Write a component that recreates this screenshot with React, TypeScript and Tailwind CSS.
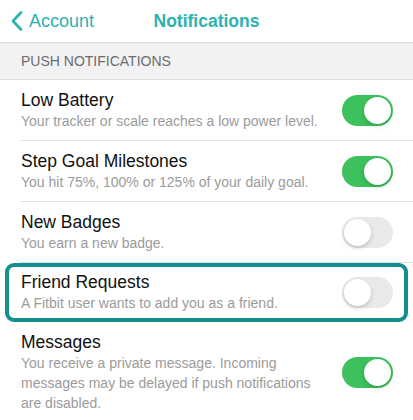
type Setting = {
  id: string;
  title: string;
  detail: string;
  enabled: boolean;
  highlighted?: boolean;
};

const settings: Setting[] = [
  { id: "battery", title: "Low Battery", detail: "Your tracker or scale reaches a low power level.", enabled: true },
  { id: "steps", title: "Step Goal Milestones", detail: "You hit 75%, 100% or 125% of your daily goal.", enabled: true },
  { id: "badges", title: "New Badges", detail: "You earn a new badge.", enabled: false },
  { id: "friends", title: "Friend Requests", detail: "A Fitbit user wants to add you as a friend.", enabled: false, highlighted: true },
  {
    id: "messages",
    title: "Messages",
    detail: "You receive a private message. Incoming messages may be delayed if push notifications are disabled.",
    enabled: true,
  },
];

const BackChevron = () => (
  <svg width="12" height="20" viewBox="0 0 12 20" fill="none" className="mr-[6px]">
    <path d="M10 1.5 L2 10 L10 18.5" stroke="currentColor" strokeWidth="2.6" strokeLinecap="round" strokeLinejoin="round" />
  </svg>
);

const Toggle = ({ on }: { on: boolean }) => (
  <div
    className={`relative h-[31px] w-[51px] shrink-0 rounded-full ${
      on ? "bg-[#3cc15c]" : "bg-[#e9e9eb]"
    }`}
  >
    <div
      className={`absolute top-[2px] h-[27px] w-[27px] rounded-full bg-white shadow-[0_2px_4px_rgba(0,0,0,0.18)] ${
        on ? "left-[22px]" : "left-[2px]"
      }`}
    />
  </div>
);

const RowBody = ({ item, className }: { item: Setting; className: string }) => (
  <div className={`flex items-center gap-3 ${className}`}>
    <div className="min-w-0 flex-1">
      <div className="text-[17.5px] leading-[22px] text-[#111]">{item.title}</div>
      <div className="max-w-[310px] text-[14px] leading-[20px] text-[#9b9b9b]">{item.detail}</div>
    </div>
    <Toggle on={item.enabled} />
  </div>
);

const SettingRow = ({ item, divider }: { item: Setting; divider: boolean }) => {
  // the highlighted row keeps its text in line with the others inside a 5px inset + 4px border
  if (item.highlighted) {
    return (
      <div className="mx-[5px] rounded-[9px] border-4 border-[#168e8d]">
        <RowBody item={item} className="pb-[5px] pl-[12px] pr-[11px] pt-[4px]" />
      </div>
    );
  }

  return (
    <div>
      <RowBody item={item} className="py-[9px] pl-[21px] pr-[20px]" />
      {divider && <div className="ml-[20px] h-px bg-[#e2e2e2]" />}
    </div>
  );
};

export default function App() {
  return (
    <div className="h-[420px] w-[413px] overflow-hidden bg-white font-['Liberation_Sans',Arial,sans-serif]">
      <header className="grid h-[42px] grid-cols-[1fr_auto_1fr] items-center">
        <div className="flex items-center pl-[11px] text-[#2bb3b0]">
          <BackChevron />
          <span className="text-[18px]">Account</span>
        </div>
        <h1 className="text-[17.5px] font-bold text-[#2bb3b0]">Notifications</h1>
        <div />
      </header>

      <div className="flex h-[38px] items-center border-y border-[#dddddd] bg-[#f2f2f4] pl-[21px] text-[14px] text-[#6c6c6c]">
        PUSH NOTIFICATIONS
      </div>

      <div className="flex flex-col">
        {settings.map((s, i) => (
          <SettingRow key={s.id} item={s} divider={!s.highlighted && i < settings.length - 1} />
        ))}
      </div>
    </div>
  );
}
